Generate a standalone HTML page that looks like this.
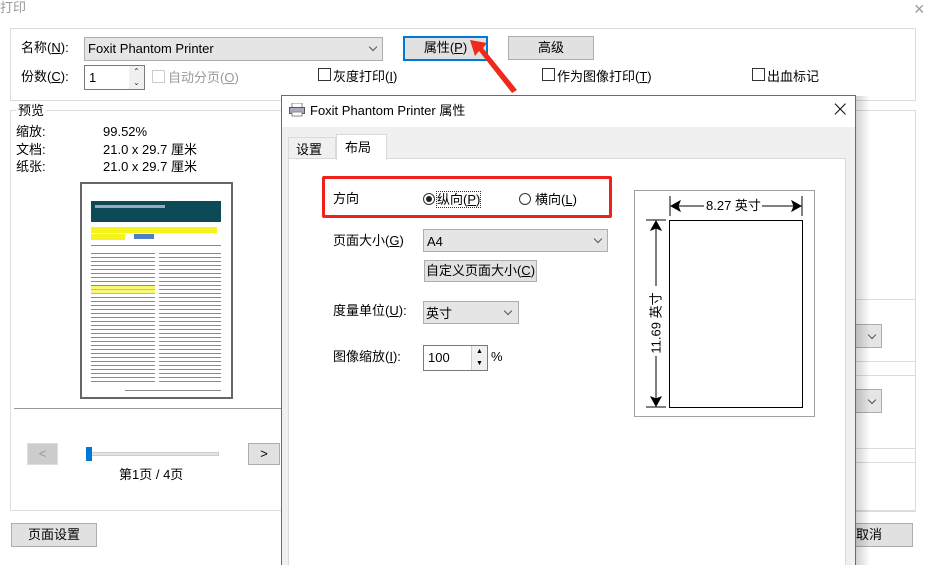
<!DOCTYPE html>
<html><head><meta charset="utf-8"><style>
*{box-sizing:border-box;margin:0;padding:0}
body{width:934px;height:565px;overflow:hidden;background:#fff;position:relative;font-family:"Liberation Sans","Noto Sans CJK SC",sans-serif;font-size:13px;line-height:15px;color:#000}
.a{position:absolute;white-space:nowrap}
.gb{position:absolute;border:1px solid #dcdcdc}
.btn{position:absolute;background:#e1e1e1;border:1px solid #adadad;text-align:center}
.cb{position:absolute;width:13px;height:13px;border:1px solid #333;background:#fff}
.sel{position:absolute;background:#e5e5e5;border:1px solid #adadad}
.chev{position:absolute;width:6px;height:6px;border-right:1px solid #555;border-bottom:1px solid #555;transform:rotate(45deg)}
.lines{position:absolute;background:repeating-linear-gradient(#fff 0 1px,#8a8a8a 1px 2px,#fff 2px 4px)}
</style></head><body>
<div class="a" style="left:0;top:0;color:#999;font-size:13px">打印</div>
<div class="a" style="left:914px;top:-1px;color:#999;font-size:18px;line-height:20px">×</div>

<div class="gb" style="left:10px;top:28px;width:906px;height:73px"></div>
<div class="a" style="left:21px;top:40px">名称(<u>N</u>):</div>
<div class="sel" style="left:84px;top:37px;width:299px;height:24px"></div>
<div class="a" style="left:88px;top:41px">Foxit Phantom Printer</div>
<div class="chev" style="left:370px;top:44px"></div>
<div class="btn" style="left:403px;top:36px;width:85px;height:25px;border:2px solid #0078d7;line-height:20px">属性(<u>P</u>)</div>
<div class="btn" style="left:508px;top:36px;width:86px;height:24px;line-height:22px">高级</div>
<div class="a" style="left:21px;top:69px">份数(<u>C</u>):</div>
<div class="a" style="left:84px;top:65px;width:61px;height:25px;border:1px solid #7a7a7a;background:#fff;padding:4px 4px">1</div>
<div class="a" style="left:129px;top:66px;width:15px;height:23px;background:#f0f0f0;font-size:8px;line-height:11px;text-align:center;color:#333">⌃<br>⌄</div>
<div class="cb" style="left:152px;top:70px;border-color:#ccc"></div>
<div class="a" style="left:168px;top:70px;color:#999">自动分页(<u>O</u>)</div>
<div class="cb" style="left:318px;top:68px"></div>
<div class="a" style="left:333px;top:69px">灰度打印(<u>I</u>)</div>
<div class="cb" style="left:542px;top:68px"></div>
<div class="a" style="left:557px;top:69px">作为图像打印(<u>T</u>)</div>
<div class="cb" style="left:752px;top:68px"></div>
<div class="a" style="left:767px;top:69px">出血标记</div>

<svg class="a" style="left:465px;top:38px" width="60" height="55"><polygon points="5,2 22,5 18,10 52,52 47,55 14,13 10,18" fill="#f02a1a"/></svg>

<div class="gb" style="left:10px;top:110px;width:906px;height:401px"></div>
<div class="a" style="left:16px;top:103px;background:#fff;padding:0 2px">预览</div>
<div class="a" style="left:16px;top:124px">缩放:</div><div class="a" style="left:103px;top:124px">99.52%</div>
<div class="a" style="left:16px;top:142px">文档:</div><div class="a" style="left:103px;top:142px">21.0 x 29.7 厘米</div>
<div class="a" style="left:16px;top:159px">纸张:</div><div class="a" style="left:103px;top:159px">21.0 x 29.7 厘米</div>
<div class="a" style="left:80px;top:182px;width:153px;height:217px;border:2px solid #666;background:#fff"></div>
<div class="a" style="left:91px;top:201px;width:130px;height:21px;background:#0d4a57"></div>
<div class="a" style="left:95px;top:205px;width:70px;height:3px;background:#9ab"></div>
<div class="a" style="left:91px;top:227px;width:126px;height:6px;background:#f4f41a"></div>
<div class="a" style="left:91px;top:234px;width:34px;height:6px;background:#f4f41a"></div>
<div class="a" style="left:134px;top:234px;width:20px;height:5px;background:#4f7fc7"></div>
<div class="lines" style="left:91px;top:244px;width:130px;height:4px"></div>
<div class="lines" style="left:91px;top:252px;width:64px;height:130px"></div>
<div class="lines" style="left:159px;top:252px;width:62px;height:130px"></div>
<div class="a" style="left:91px;top:286px;width:64px;height:8px;background:rgba(244,244,26,.6)"></div>
<div class="lines" style="left:125px;top:389px;width:96px;height:3px"></div>
<div class="a" style="left:14px;top:408px;width:268px;height:1px;background:#999"></div>
<div class="a" style="left:27px;top:443px;width:31px;height:22px;background:#ccc;border:1px solid #ddd;color:#999;text-align:center;line-height:20px">&lt;</div>
<div class="a" style="left:88px;top:452px;width:131px;height:4px;background:#e5e5e5;border:1px solid #ccc"></div>
<div class="a" style="left:86px;top:447px;width:6px;height:14px;background:#0078d7"></div>
<div class="a" style="left:248px;top:443px;width:32px;height:22px;background:#e1e1e1;border:1px solid #adadad;text-align:center;line-height:20px">&gt;</div>
<div class="a" style="left:119px;top:467px">第1页 / 4页</div>
<div class="btn" style="left:11px;top:523px;width:86px;height:24px;line-height:22px">页面设置</div>

<div class="gb" style="left:845px;top:299px;width:71px;height:63px"></div>
<div class="sel" style="left:845px;top:324px;width:37px;height:24px"></div><div class="chev" style="left:869px;top:332px"></div>
<div class="gb" style="left:845px;top:375px;width:71px;height:74px"></div>
<div class="sel" style="left:845px;top:389px;width:37px;height:24px"></div><div class="chev" style="left:869px;top:397px"></div>
<div class="gb" style="left:845px;top:462px;width:71px;height:50px"></div>
<div class="btn" style="left:835px;top:523px;width:78px;height:24px;line-height:22px;text-align:left;padding-left:20px">取消</div>

<!-- properties dialog -->
<div class="a" style="left:856px;top:96px;width:14px;height:469px;background:linear-gradient(90deg,rgba(0,0,0,.18),rgba(0,0,0,0))"></div>
<div class="a" style="left:281px;top:95px;width:575px;height:470px;background:#f0f0f0;border:1px solid #6b6b6b;border-bottom:none"></div>
<div class="a" style="left:282px;top:96px;width:573px;height:31px;background:#fff"></div>
<svg class="a" style="left:289px;top:103px" width="16" height="14"><rect x="3" y="0" width="10" height="5" fill="#fff" stroke="#888"/><rect x="0.5" y="4.5" width="15" height="6" fill="#aab" stroke="#556"/><rect x="3" y="9" width="10" height="4" fill="#fff" stroke="#888"/></svg>
<div class="a" style="left:310px;top:103px;font-size:13px">Foxit Phantom Printer 属性</div>
<div class="a" style="left:831px;top:97px;font-size:22px;line-height:26px;font-weight:300;color:#111;font-family:'DejaVu Sans',sans-serif">×</div>
<div class="a" style="left:288px;top:158px;width:558px;height:407px;background:#fff;border:1px solid #d9d9d9;border-bottom:none"></div>
<div class="a" style="left:288px;top:137px;width:48px;height:22px;background:#f0f0f0;border:1px solid #d9d9d9;padding:4px 0 0 7px">设置</div>
<div class="a" style="left:336px;top:134px;width:51px;height:26px;background:#fff;border:1px solid #d9d9d9;border-bottom:none;padding:5px 0 0 8px">布局</div>

<div class="a" style="left:322px;top:176px;width:290px;height:42px;border:3px solid #f0211a;border-radius:2px"></div>
<div class="a" style="left:333px;top:191px">方向</div>
<div class="a" style="left:423px;top:193px;width:12px;height:12px;border:1px solid #333;border-radius:50%;background:#fff"></div>
<div class="a" style="left:426px;top:196px;width:6px;height:6px;border-radius:50%;background:#222"></div>
<div class="a" style="left:437px;top:192px;outline:1px dotted #333">纵向(<u>P</u>)</div>
<div class="a" style="left:519px;top:193px;width:12px;height:12px;border:1px solid #333;border-radius:50%;background:#fff"></div>
<div class="a" style="left:535px;top:192px">横向(<u>L</u>)</div>

<div class="a" style="left:333px;top:233px">页面大小(<u>G</u>)</div>
<div class="sel" style="left:423px;top:229px;width:185px;height:23px"></div>
<div class="a" style="left:427px;top:234px">A4</div><div class="chev" style="left:595px;top:236px"></div>
<div class="btn" style="left:424px;top:260px;width:113px;height:22px;line-height:20px">自定义页面大小(<u>C</u>)</div>
<div class="a" style="left:333px;top:303px">度量单位(<u>U</u>):</div>
<div class="sel" style="left:423px;top:301px;width:96px;height:23px"></div>
<div class="a" style="left:426px;top:306px">英寸</div><div class="chev" style="left:505px;top:308px"></div>
<div class="a" style="left:333px;top:349px">图像缩放(<u>I</u>):</div>
<div class="a" style="left:423px;top:345px;width:65px;height:26px;border:1px solid #7a7a7a;background:#fff;padding:4px 4px">100</div>
<div class="a" style="left:471px;top:346px;width:16px;height:24px;background:#f0f0f0;border-left:1px solid #ccc;font-size:7px;line-height:12px;text-align:center">▲<br>▼</div>
<div class="a" style="left:491px;top:349px">%</div>

<div class="a" style="left:634px;top:190px;width:181px;height:227px;border:1px solid #a0a0a0"></div>
<div class="a" style="left:669px;top:220px;width:134px;height:188px;border:1px solid #000"></div>
<svg class="a" style="left:640px;top:196px" width="170" height="218">
<g stroke="#000" fill="#000" stroke-width="1">
<line x1="30" y1="0" x2="30" y2="20"/><line x1="162" y1="0" x2="162" y2="20"/>
<line x1="31" y1="10" x2="64" y2="10"/><line x1="122" y1="10" x2="161" y2="10"/>
<polygon points="31,10 40,5 38,10 40,15"/><polygon points="161,10 152,5 154,10 152,15"/>
<line x1="6" y1="24" x2="26" y2="24"/><line x1="6" y1="211" x2="26" y2="211"/>
<line x1="16" y1="25" x2="16" y2="90"/><line x1="16" y1="160" x2="16" y2="210"/>
<polygon points="16,25 11,34 16,32 21,34"/><polygon points="16,210 11,201 16,203 21,201"/>
</g></svg>
<div class="a" style="left:706px;top:198px;font-size:13px">8.27 英寸</div>
<div class="a" style="left:656px;top:323px;transform:translate(-50%,-50%) rotate(-90deg);font-size:13px;">11.69 英寸</div>
</body></html>
